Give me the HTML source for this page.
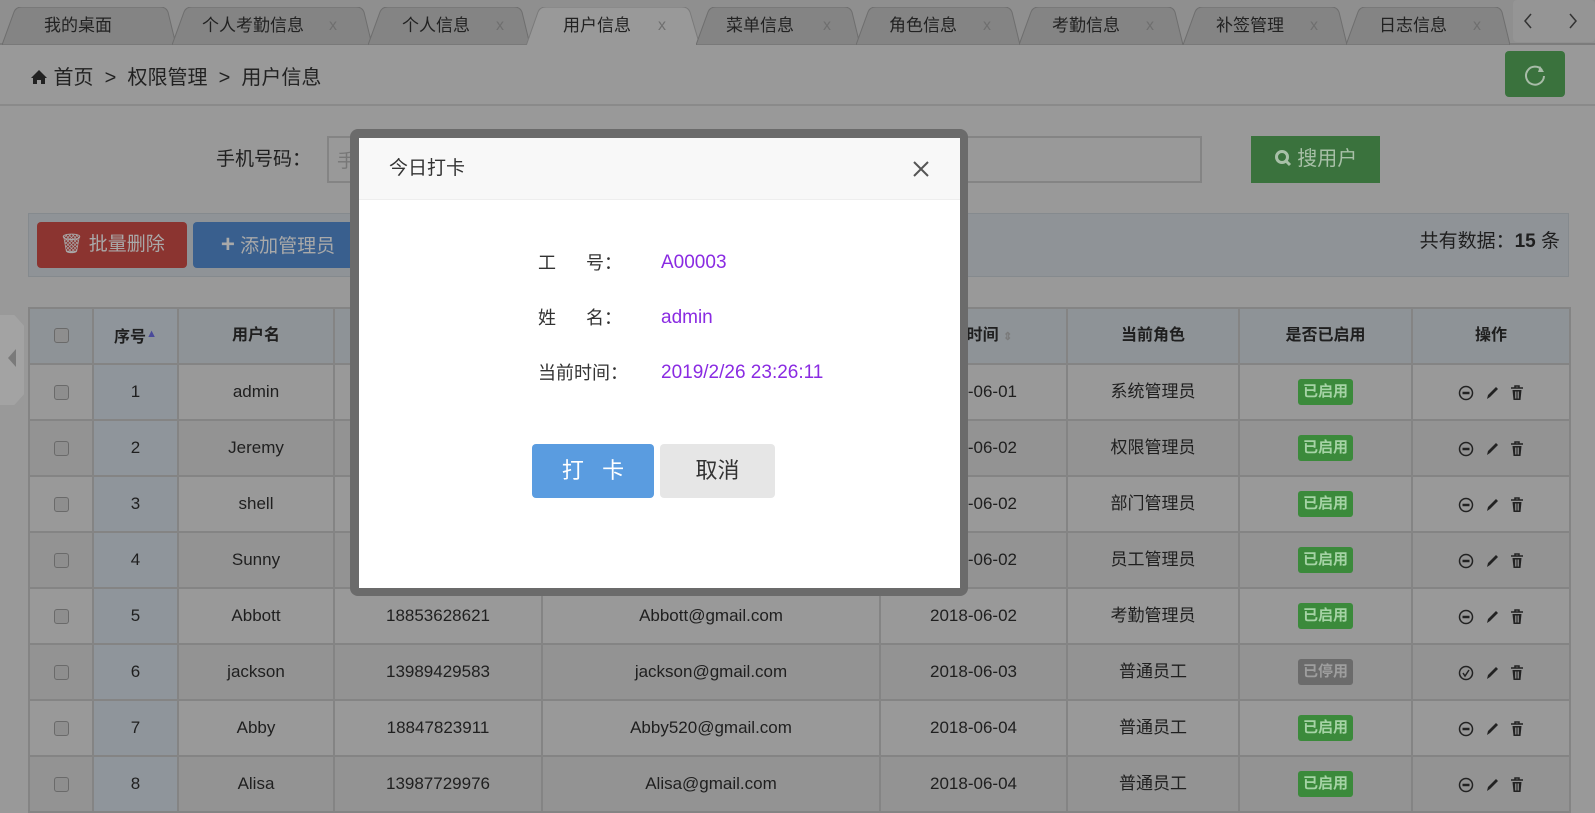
<!DOCTYPE html>
<html><head><meta charset="utf-8">
<style>
*{box-sizing:border-box;margin:0;padding:0}
body{width:1595px;height:790px;overflow:hidden;background:#999;font-family:"Liberation Sans","Noto Sans CJK SC",sans-serif;color:#1f1f1f;position:relative}
.abs{position:absolute}
.tabbar{left:0;top:0;width:1595px;height:45px;background:#8f8f8f;border-bottom:2px solid #7c7c7c}
.tab{position:absolute;top:7px;height:38px;font-size:17px;line-height:38px;color:#222}
.tab svg{position:absolute;left:0;top:0}
.tab span{position:absolute;top:0}
.tab i{position:absolute;top:0;font-style:normal;color:#6f6f6f;font-size:16px}
.arrows{left:1513px;top:0;width:82px;height:42px;background:#959595;border-radius:4px;font-size:20px;color:#333}
.crumb{left:30px;top:61px;font-size:20px;color:#222}
.line{left:0;top:104px;width:1595px;height:2px;background:#8a8a8a}
.refresh{left:1505px;top:51px;width:60px;height:46px;background:#3a723d;border-radius:4px}
.input{border:2px solid #848484;background:#999;height:47px;top:136px}
.search{left:1251px;top:136px;width:129px;height:47px;background:#3a723d;color:#a8c0a8;font-size:20px;line-height:47px;text-align:center}
.toolbar{left:28px;top:213px;width:1541px;height:64px;background:#8f9397;border:1px solid #858a8e}
.btn{position:absolute;top:8px;height:46px;border-radius:4px;font-size:19px;line-height:46px;color:#a9a9a9;text-align:center}
table{position:absolute;left:28px;top:307px;border-collapse:collapse;width:1541px;table-layout:fixed;font-size:17px}
td,th{border:2px solid #848484;height:56px;text-align:center;vertical-align:middle;line-height:20px}
th{background:#8e9397;font-weight:bold;font-size:16px}
tr.a td{background:#999}
tr.b td{background:#939393}
td.c1{background:#8f959b!important}
.cb{display:inline-block;width:15px;height:15px;border:1px solid #6a6a6a;border-radius:3px;background:#8e8e8e;vertical-align:middle}
.badge{display:inline-block;background:#3b8a3b;color:#a5d3a5;font-weight:bold;font-size:15px;padding:0 5px;height:26px;line-height:26px;border-radius:3px}
.badge.off{background:#6b6b6b;color:#9e9e9e}
.ops svg{vertical-align:middle;margin:0 5px}
.left{left:0;top:315px;width:24px;height:90px;background:#a3a3a3;clip-path:polygon(0 0,60% 0,100% 12%,100% 88%,60% 100%,0 100%)}
.overlayframe{left:350px;top:129px;width:618px;height:467px;background:#6b6b6b;border-radius:8px}
.modal{left:359px;top:138px;width:601px;height:450px;background:#fff}
.mh{height:62px;background:#f8f8f8;border-bottom:1px solid #eee;font-size:19px;line-height:62px;padding-left:30px;color:#333}
.fl{position:absolute;font-size:18px;color:#333;line-height:26px}
.fv{position:absolute;font-size:19px;color:#8a2be2;line-height:26px}
</style></head><body>

<div class="abs tabbar"></div>
<div class="tab" style="left:2px;width:174px"><svg width="174" height="38"><path d="M0 38 L12 5 Q14 0 20 0 L158 0 Q164 0 166 5 L174 38 Z" fill="#848484" stroke="#6e6e6e"/></svg><span style="left:42px">我的桌面</span></div>
<div class="tab" style="left:172px;width:200px"><svg width="200" height="38"><path d="M0 38 L12 5 Q14 0 20 0 L184 0 Q190 0 192 5 L200 38 Z" fill="#848484" stroke="#6e6e6e"/></svg><span style="left:30px">个人考勤信息</span><i style="left:157px">x</i></div>
<div class="tab" style="left:368px;width:162px"><svg width="162" height="38"><path d="M0 38 L12 5 Q14 0 20 0 L146 0 Q152 0 154 5 L162 38 Z" fill="#848484" stroke="#6e6e6e"/></svg><span style="left:34px">个人信息</span><i style="left:128px">x</i></div>
<div class="tab" style="left:526px;width:174px"><svg width="174" height="38"><path d="M0 39 L12 5 Q14 0 20 0 L156 0 Q162 0 164 5 L174 39 Z" fill="#999" stroke="#7a7a7a"/></svg><span style="left:37px">用户信息</span><i style="left:132px">x</i></div>
<div class="tab" style="left:696px;width:164px"><svg width="164" height="38"><path d="M0 38 L12 5 Q14 0 20 0 L148 0 Q154 0 156 5 L164 38 Z" fill="#848484" stroke="#6e6e6e"/></svg><span style="left:30px">菜单信息</span><i style="left:127px">x</i></div>
<div class="tab" style="left:856px;width:164px"><svg width="164" height="38"><path d="M0 38 L12 5 Q14 0 20 0 L148 0 Q154 0 156 5 L164 38 Z" fill="#848484" stroke="#6e6e6e"/></svg><span style="left:33px">角色信息</span><i style="left:127px">x</i></div>
<div class="tab" style="left:1019px;width:164px"><svg width="164" height="38"><path d="M0 38 L12 5 Q14 0 20 0 L148 0 Q154 0 156 5 L164 38 Z" fill="#848484" stroke="#6e6e6e"/></svg><span style="left:33px">考勤信息</span><i style="left:127px">x</i></div>
<div class="tab" style="left:1183px;width:164px"><svg width="164" height="38"><path d="M0 38 L12 5 Q14 0 20 0 L148 0 Q154 0 156 5 L164 38 Z" fill="#848484" stroke="#6e6e6e"/></svg><span style="left:33px">补签管理</span><i style="left:127px">x</i></div>
<div class="tab" style="left:1346px;width:164px"><svg width="164" height="38"><path d="M0 38 L12 5 Q14 0 20 0 L148 0 Q154 0 156 5 L164 38 Z" fill="#848484" stroke="#6e6e6e"/></svg><span style="left:33px">日志信息</span><i style="left:127px">x</i></div>
<div class="abs arrows"><svg width="82" height="42"><path d="M18 14 L12 21 L18 28" fill="none" stroke="#333" stroke-width="1.5"/><path d="M57 14 L63 21 L57 28" fill="none" stroke="#333" stroke-width="1.5"/></svg></div>

<div class="abs crumb"><svg width="18" height="16" style="vertical-align:-1px"><path d="M9 1 L1 9 L3 9 L3 15 L7 15 L7 11 L11 11 L11 15 L15 15 L15 9 L17 9 Z" fill="#222"/></svg> 首页 &nbsp;&gt;&nbsp; 权限管理 &nbsp;&gt;&nbsp; 用户信息</div>
<div class="abs line"></div>
<div class="abs refresh"><svg width="60" height="46"><path d="M37 19 A9 9 0 1 0 39 25" fill="none" stroke="#a8bca8" stroke-width="2"/><path d="M35 15 L39 21 L33 21 Z" fill="#a8bca8"/></svg></div>

<div class="abs" style="left:216px;top:144px;font-size:19px">手机号码：</div>
<div class="abs input" style="left:327px;width:440px"><span style="position:absolute;left:8px;top:8px;color:#777;font-size:19px">手机号码</span></div>
<div class="abs input" style="left:810px;width:392px"><span style="position:absolute;left:8px;top:8px;color:#777;font-size:19px">请输入用户名称</span></div>
<div class="abs search"><svg width="18" height="18" style="vertical-align:-2px"><circle cx="8" cy="8" r="5.5" fill="none" stroke="#a8c0a8" stroke-width="3"/><path d="M12 12 L16 16" stroke="#a8c0a8" stroke-width="3"/></svg> 搜用户</div>

<div class="abs toolbar">
<div class="btn" style="left:8px;width:150px;background:#8b3430">🗑 批量删除</div>
<div class="btn" style="left:164px;width:170px;background:#395f8e"><b style="font-size:24px">+</b> 添加管理员</div>
<div style="position:absolute;right:8px;top:12px;font-size:19px">共有数据：<b>15</b> 条</div>
</div>

<div class="abs left"><svg width="24" height="90"><path d="M16 34 L8 43 L16 52 Z" fill="#7a7a7a"/></svg></div>

<table>
<colgroup><col style="width:64px"><col style="width:85px"><col style="width:156px"><col style="width:208px"><col style="width:338px"><col style="width:187px"><col style="width:172px"><col style="width:173px"><col style="width:158px"></colgroup>
<tr><th><span class="cb"></span></th><th style="background:#8f959b">序号<span style="color:#4a4a9a;font-size:11px;vertical-align:5px">▲</span></th><th>用户名</th><th>手机</th><th>邮箱</th><th>加入时间 <span style="color:#7a7a7a;font-size:11px">⇕</span></th><th>当前角色</th><th>是否已启用</th><th>操作</th></tr>
<tr class="a"><td><span class="cb"></span></td><td class="c1">1</td><td>admin</td><td>18888888888</td><td>admin@gmail.com</td><td>2018-06-01</td><td>系统管理员</td><td><span class="badge">已启用</span></td><td class="ops">OPS</td></tr>
<tr class="b"><td><span class="cb"></span></td><td class="c1">2</td><td>Jeremy</td><td>13888888888</td><td>jeremy@gmail.com</td><td>2018-06-02</td><td>权限管理员</td><td><span class="badge">已启用</span></td><td class="ops">OPS</td></tr>
<tr class="a"><td><span class="cb"></span></td><td class="c1">3</td><td>shell</td><td>13888888888</td><td>shell@gmail.com</td><td>2018-06-02</td><td>部门管理员</td><td><span class="badge">已启用</span></td><td class="ops">OPS</td></tr>
<tr class="b"><td><span class="cb"></span></td><td class="c1">4</td><td>Sunny</td><td>13888888888</td><td>sunny@gmail.com</td><td>2018-06-02</td><td>员工管理员</td><td><span class="badge">已启用</span></td><td class="ops">OPS</td></tr>
<tr class="a"><td><span class="cb"></span></td><td class="c1">5</td><td>Abbott</td><td>18853628621</td><td>Abbott@gmail.com</td><td>2018-06-02</td><td>考勤管理员</td><td><span class="badge">已启用</span></td><td class="ops">OPS</td></tr>
<tr class="b"><td><span class="cb"></span></td><td class="c1">6</td><td>jackson</td><td>13989429583</td><td>jackson@gmail.com</td><td>2018-06-03</td><td>普通员工</td><td><span class="badge off">已停用</span></td><td class="ops">OPSC</td></tr>
<tr class="a"><td><span class="cb"></span></td><td class="c1">7</td><td>Abby</td><td>18847823911</td><td>Abby520@gmail.com</td><td>2018-06-04</td><td>普通员工</td><td><span class="badge">已启用</span></td><td class="ops">OPS</td></tr>
<tr class="b"><td><span class="cb"></span></td><td class="c1">8</td><td>Alisa</td><td>13987729976</td><td>Alisa@gmail.com</td><td>2018-06-04</td><td>普通员工</td><td><span class="badge">已启用</span></td><td class="ops">OPS</td></tr>
</table>

<div class="abs overlayframe"></div>
<div class="abs modal">
<div class="mh">今日打卡</div>
<svg class="abs" style="left:553px;top:22px" width="18" height="18"><path d="M2 2 L16 16 M16 2 L2 16" stroke="#555" stroke-width="2"/></svg>
<div class="fl" style="left:179px;top:112px">工&nbsp;&nbsp;&nbsp;&nbsp;&nbsp;&nbsp;号：</div><div class="fv" style="left:302px;top:112px">A00003</div>
<div class="fl" style="left:179px;top:167px">姓&nbsp;&nbsp;&nbsp;&nbsp;&nbsp;&nbsp;名：</div><div class="fv" style="left:302px;top:167px">admin</div>
<div class="fl" style="left:179px;top:222px">当前时间：</div><div class="fv" style="left:302px;top:222px">2019/2/26 23:26:11</div>
<div class="abs" style="left:173px;top:306px;width:122px;height:54px;background:#5a9ce0;border-radius:4px;color:#fff;font-size:22px;line-height:54px;text-align:center">打&nbsp;&nbsp;&nbsp;卡</div>
<div class="abs" style="left:301px;top:306px;width:115px;height:54px;background:#e6e6e6;border-radius:4px;color:#333;font-size:22px;line-height:54px;text-align:center">取消</div>
</div>

<script>
var minus='<svg width="16" height="16"><circle cx="8" cy="8" r="6.5" fill="none" stroke="#222" stroke-width="1.5"/><path d="M4.5 8 H11.5" stroke="#222" stroke-width="2.5"/></svg>';
var check='<svg width="16" height="16"><circle cx="8" cy="8" r="6.5" fill="none" stroke="#222" stroke-width="1.5"/><path d="M5 8 L7 11 L11 5" fill="none" stroke="#222" stroke-width="1.5"/></svg>';
var pen='<svg width="16" height="16"><path d="M3 14 L4 10 L12 2 L14 4 L6 12 Z" fill="#222"/></svg>';
var trash='<svg width="14" height="16"><path d="M1 3 H13 M5 3 V1 H9 V3" stroke="#222" stroke-width="1.5" fill="none"/><path d="M2.5 5 H11.5 L10.5 15 H3.5 Z" fill="#222"/><path d="M5.5 6.5 V13.5 M7 6.5 V13.5 M8.5 6.5 V13.5" stroke="#999" stroke-width="0.8"/></svg>';
document.querySelectorAll('.ops').forEach(function(td){var c=td.textContent=='OPSC';td.innerHTML=(c?check:minus)+pen+trash;});
</script>
</body></html>
